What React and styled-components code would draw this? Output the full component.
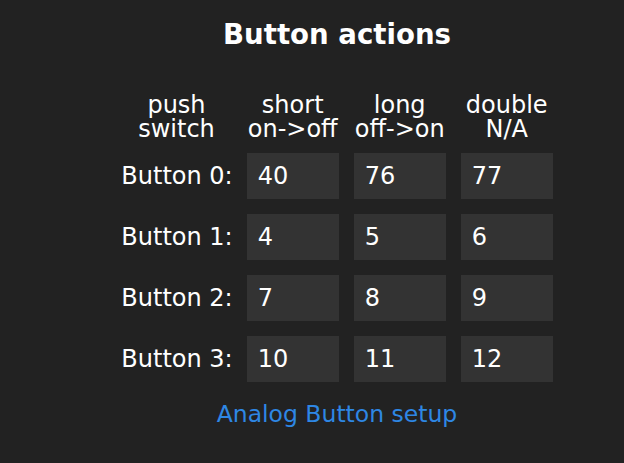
import React from "react";
import styled, { createGlobalStyle } from "styled-components";

const Global = createGlobalStyle`
  html, body {
    margin: 0;
    padding: 0;
    background: #222222;
  }
  body {
    font-family: "DejaVu Sans", Verdana, sans-serif;
    color: #ffffff;
  }
`;

const Page = styled.div`
  box-sizing: border-box;
  width: 624px;
  min-height: 463px;
  padding: 18px 0 0 50px;
  display: flex;
  flex-direction: column;
  align-items: center;
`;

const Title = styled.h1`
  margin: 0 0 42px;
  font-size: 27.6px;
  font-weight: bold;
  line-height: normal;
`;

const Table = styled.div`
  display: grid;
  grid-template-columns: auto repeat(3, 92px);
  grid-template-rows: auto repeat(4, 46px);
  column-gap: 15px;
  row-gap: 15px;
  align-items: center;
`;

const Head = styled.div`
  display: flex;
  flex-direction: column;
  align-items: center;
  margin-bottom: -3px;
`;

const HeadLine = styled.span`
  display: block;
  font-size: 24px;
  line-height: 24px;
  height: 24px;
  white-space: nowrap;
`;

const Label = styled.div`
  font-size: 24px;
  text-align: right;
  white-space: nowrap;
  margin-right: -1px;
`;

const Field = styled.input`
  box-sizing: border-box;
  width: 92px;
  height: 46px;
  border: none;
  outline: none;
  background: #333333;
  color: #ffffff;
  font-family: "DejaVu Sans", Verdana, sans-serif;
  font-size: 24px;
  padding: 0 10px 0 11px;
  margin: 0;
`;

const Link = styled.a`
  margin-top: 18px;
  font-size: 23.5px;
  line-height: normal;
  color: #2e87e4;
  text-decoration: none;
`;

const heads = [
  ["push", "switch"],
  ["short", "on->off"],
  ["long", "off->on"],
  ["double", "N/A"],
];

const rows = [
  ["40", "76", "77"],
  ["4", "5", "6"],
  ["7", "8", "9"],
  ["10", "11", "12"],
];

export default function App() {
  return (
    <>
      <Global />
      <Page>
        <Title>Button actions</Title>
        <Table>
          {heads.map((h, i) => (
            <Head key={i}>
              <HeadLine>{h[0]}</HeadLine>
              <HeadLine>{h[1]}</HeadLine>
            </Head>
          ))}
          {rows.map((r, i) => (
            <React.Fragment key={i}>
              <Label>Button {i}:</Label>
              {r.map((v, j) => (
                <Field key={j} type="text" defaultValue={v} />
              ))}
            </React.Fragment>
          ))}
        </Table>
        <Link href="#">Analog Button setup</Link>
      </Page>
    </>
  );
}
